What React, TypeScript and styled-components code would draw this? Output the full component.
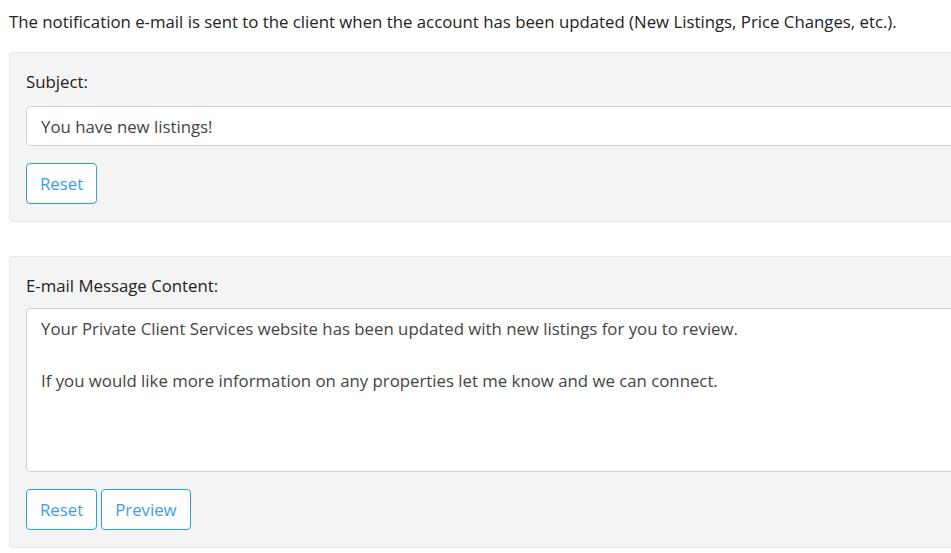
import React, { useState } from "react";
import styled, { createGlobalStyle } from "styled-components";

const GlobalStyle = createGlobalStyle`
  html, body {
    margin: 0;
    padding: 0;
    background: #ffffff;
    overflow: hidden;
  }
  body {
    font-family: "Open Sans", "Noto Sans", sans-serif;
    color: #222;
  }
`;

const Page = styled.div`
  width: 1100px;
  padding: 9px 0 0 9px;
`;

const Intro = styled.p`
  margin: 0 0 17px;
  font-size: 16.8px;
  line-height: 26px;
  color: #222;
`;

const Well = styled.section`
  background: #f4f4f4;
  border: 1px solid #e6e6e6;
  border-radius: 4px;
  padding: 16px 16px 17px;
  margin-bottom: 34px;

  &:last-child {
    margin-bottom: 0;
  }
`;

const Label = styled.label<{ $gap?: number }>`
  display: block;
  font-size: 16.8px;
  line-height: 26px;
  color: #222;
  margin-bottom: ${p => p.$gap ?? 11}px;
`;

const TextInput = styled.input`
  display: block;
  box-sizing: border-box;
  width: 100%;
  height: 40px;
  padding: 0 14px;
  border: 1px solid #d2d2d6;
  border-radius: 4px;
  background: #fff;
  font-family: inherit;
  font-size: 16.8px;
  color: #444;
  outline: none;
`;

const TextArea = styled.textarea`
  display: block;
  box-sizing: border-box;
  width: 100%;
  height: 164px;
  padding: 7px 14px 5px;
  border: 1px solid #d2d2d6;
  border-radius: 4px;
  background: #fff;
  font-family: inherit;
  font-size: 16.8px;
  line-height: 26px;
  color: #444;
  resize: none;
  outline: none;
`;

const Actions = styled.div`
  display: flex;
  gap: 4px;
  margin-top: 17px;
`;

const OutlineButton = styled.button`
  box-sizing: border-box;
  height: 41px;
  padding: 0 13px;
  border: 1px solid #2d9cf0;
  border-radius: 4px;
  background: #fff;
  color: #3a9ef0;
  font-family: inherit;
  font-size: 16.8px;
  cursor: pointer;
`;

const defaultSubject = "You have new listings!";
const defaultBody =
  "Your Private Client Services website has been updated with new listings for you to review.\n\nIf you would like more information on any properties let me know and we can connect.";

export default function App() {
  const [subject, setSubject] = useState(defaultSubject);
  const [body, setBody] = useState(defaultBody);

  return (
    <Page>
      <GlobalStyle />
      <Intro>
        The notification e-mail is sent to the client when the account has been
        updated (New Listings, Price Changes, etc.).
      </Intro>

      <Well>
        <Label htmlFor="subject">Subject:</Label>
        <TextInput
          id="subject"
          value={subject}
          onChange={e => setSubject(e.target.value)}
        />
        <Actions>
          <OutlineButton type="button" onClick={() => setSubject(defaultSubject)}>
            Reset
          </OutlineButton>
        </Actions>
      </Well>

      <Well>
        <Label htmlFor="content" $gap={9}>E-mail Message Content:</Label>
        <TextArea
          id="content"
          value={body}
          onChange={e => setBody(e.target.value)}
        />
        <Actions>
          <OutlineButton type="button" onClick={() => setBody(defaultBody)}>
            Reset
          </OutlineButton>
          <OutlineButton type="button">Preview</OutlineButton>
        </Actions>
      </Well>
    </Page>
  );
}
